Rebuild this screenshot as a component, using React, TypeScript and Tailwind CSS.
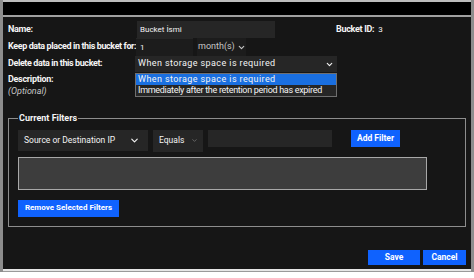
import { ChevronDown } from 'lucide-react';

const font = { fontFamily: 'Roboto, "Liberation Sans", sans-serif' };

export default function App() {
  return (
    <div className="w-[474px] h-[278px] bg-white text-[9px] text-[#f4f4f4]" style={font}>
      <div className="h-[272px] border-x-[3px] border-[#8d8d8d] flex flex-col">
        <div className="h-[2px] bg-[#bdbdbd]" />
        <div className="h-[13px] bg-black" />
        <div className="h-[2px] bg-[#a0a0a0]" />
        <div className="flex-1 bg-[#161616] flex flex-col pl-[5px] pr-[3px]">
          {/* name row */}
          <div className="flex items-center h-[17px] mt-[4px]">
            <div className="w-[129px] shrink-0 font-bold tracking-[-0.3px]">Name:</div>
            <div className="w-[138px] h-[17px] bg-[#262626] pl-[3px] flex items-center text-[8px]">Bucket İsmi</div>
            <div className="ml-[61px] font-bold tracking-[-0.3px]">Bucket ID:</div>
            <div className="ml-[4px] text-[8px]">3</div>
          </div>
          {/* keep row */}
          <div className="flex items-center h-[18px]">
            <div className="w-[128px] shrink-0 font-bold whitespace-nowrap tracking-[-0.4px]">Keep data placed in this bucket for:</div>
            <div className="w-[57px] h-[18px] bg-[#1c1c1c] border-t border-[#262626] pl-[4px] flex items-center text-[8px]">1</div>
            <div className="ml-[4px] h-[18px] bg-[#1c1c1c] flex items-center gap-[2px] pl-[1px] text-[#c6c6c6] text-[9px]">
              month(s) <ChevronDown size={9} strokeWidth={3} />
            </div>
          </div>
          {/* delete row */}
          <div className="flex h-[16px]">
            <div className="w-[127px] shrink-0 font-bold flex items-center tracking-[-0.4px]">Delete data in this bucket:</div>
            <div className="relative">
              <div className="w-[202px] h-[16px] bg-[#262626] flex items-center justify-between px-[3px] text-[9px]">
                <span className="tracking-[0.4px]">When storage space is required</span>
                <ChevronDown size={9} strokeWidth={3} />
              </div>
              <div className="absolute left-0 top-[17px] w-[202px] border border-[#6f6f6f] bg-[#262626] text-[9px] leading-[11px]">
                <div className="bg-[#1a6fe0] px-[2px] tracking-[0.4px]">When storage space is required</div>
                <div className="px-[2px] whitespace-nowrap tracking-[-0.3px]">Immediately after the retention period has expired</div>
              </div>
            </div>
          </div>
          {/* description */}
          <div className="leading-[12px] mt-[1px]">
            <div className="font-bold tracking-[-0.3px]">Description:</div>
            <div className="italic text-[#c6c6c6]">(Optional)</div>
          </div>
          {/* fieldset */}
          <fieldset className="mt-[15px] mr-[2px] border border-[#8d8d8d] px-[9px] pb-[9px] pt-[4px] min-w-0">
            <legend className="font-bold px-[1px] text-[9px]">Current Filters</legend>
            <div className="flex items-start gap-[5px]">
              <div className="w-[130px] h-[21px] bg-[#262626] flex items-center justify-between pl-[6px] pr-[8px] text-[8.5px]">
                <span>Source or Destination IP</span>
                <ChevronDown size={11} strokeWidth={2.5} />
              </div>
              <div className="w-[50px] h-[22px] bg-[#262626] flex items-center justify-between pl-[6px] pr-[5px] text-[8.5px]">
                <span>Equals</span>
                <ChevronDown size={7} strokeWidth={2} className="text-[#8d8d8d]" />
              </div>
              <div className="w-[124px] h-[17px] bg-[#262626]" />
              <button className="ml-[14px] w-[49px] h-[17px] bg-[#0f62fe] text-white font-bold text-[8.5px]">Add Filter</button>
            </div>
            <div className="mt-[5px] w-[409px] h-[33px] bg-[#3d3d3d] border border-[#a8a8a8]" />
            <button className="mt-[10px] w-[101px] h-[17px] bg-[#0f62fe] text-white font-bold text-[8px]">Remove Selected Filters</button>
          </fieldset>
          <div className="flex justify-end gap-[3px] mt-auto mb-[4px] pr-[2px]">
            <button className="w-[52px] h-[15px] bg-[#0f62fe] text-white font-bold text-[8.5px]">Save</button>
            <button className="w-[43px] h-[15px] bg-[#0f62fe] text-white font-bold text-[8.5px]">Cancel</button>
          </div>
        </div>
        <div className="h-[2px] bg-[#e6e6e6]" />
        <div className="h-[1px] bg-[#9a9a9a]" />
      </div>
    </div>
  );
}
